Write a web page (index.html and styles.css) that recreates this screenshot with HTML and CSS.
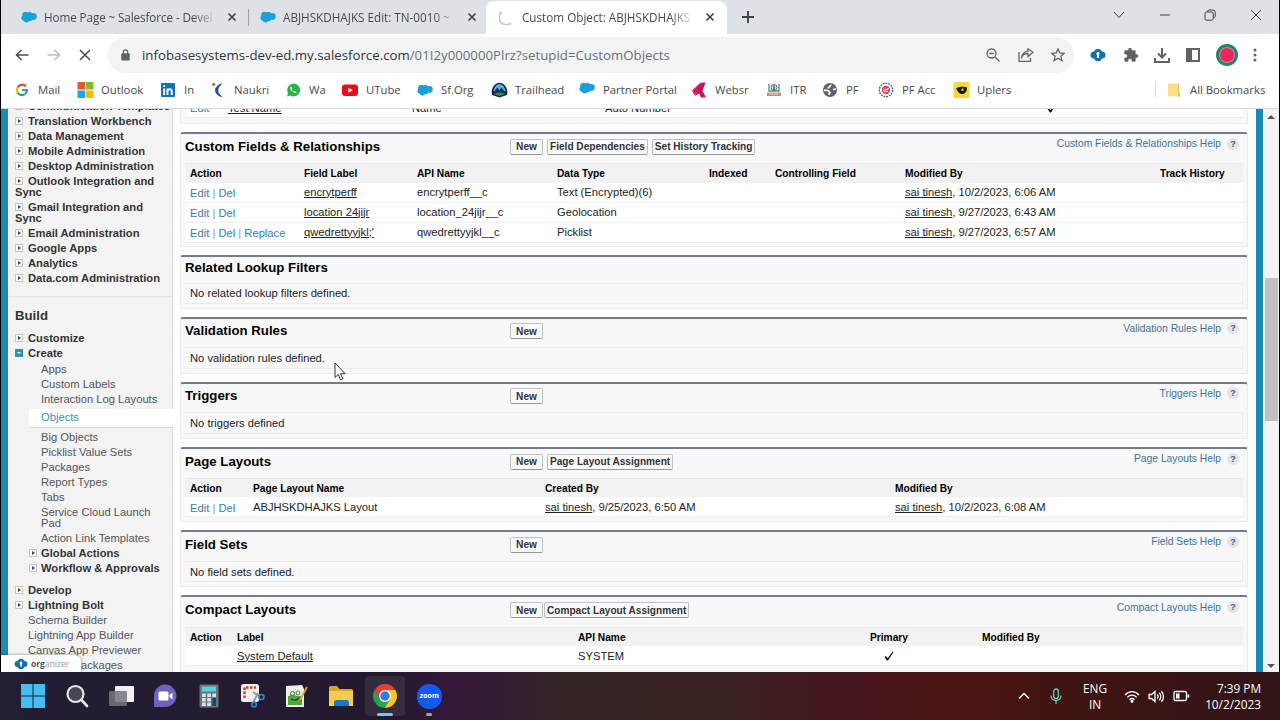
FILE: index.html
```
<!DOCTYPE html>
<html lang="en">
<head>
    <meta charset="UTF-8">
    <meta name="viewport" content="width=device-width, initial-scale=1">
    <title>Custom Object: ABJHSKDHAJKS</title>
    <link rel="stylesheet" href="styles.css">
</head>
<body>
    <!-- shared shapes -->
    <svg class="defs" width="0" height="0">
        <symbol id="cloud" viewBox="0 0 16 12">
            <path fill="#1b9fd9" d="M6.7 1.6A3 3 0 0 1 11 2.3a3.5 3.5 0 0 1 1.300-.3 3.400 3.400 0 0 1 0 6.900c-.4 0-.7 0-1-.1a2.600 2.600 0 0 1-3.300 1.100 3 3 0 0 1-5.400-.2A2.700 2.700 0 0 1 1.300 5 3.100 3.100 0 0 1 4 .8c1.100 0 2.100.4 2.700.8z"/>
        </symbol>
        <symbol id="close" viewBox="0 0 10 10">
            <path d="M1.500 1.500l7 7M8.500 1.500l-7 7" stroke="#3c4043" stroke-width="1.600" fill="none"/>
        </symbol>
        <symbol id="org" viewBox="0 0 18 14">
            <path fill="#1370ae" d="M5 3.500A4.300 4.300 0 0 1 13 3.500a3.500 3.500 0 0 1 0 7A4.300 4.300 0 0 1 5 10.500a3.500 3.500 0 0 1 0-7z"/>
            <path fill="#fff" d="M9 4a1.700 1.700 0 0 1 1 3v3H8V7a1.700 1.700 0 0 1 1-3z"/>
        </symbol>
    </svg>

    <div class="screen">
        <header class="tabstrip">
            <div class="tab tab-first">
                <svg class="tab-icon" width="16" height="12"><use href="#cloud"/></svg>
                <span class="tab-title">Home Page ~ Salesforce - Devel</span>
                <svg width="10" height="10"><use href="#close"/></svg>
            </div>
            <div class="tab tab-second">
                <svg class="tab-icon" width="16" height="12"><use href="#cloud"/></svg>
                <span class="tab-title">ABJHSKDHAJKS Edit: TN-0010 ~</span>
                <svg width="10" height="10"><use href="#close"/></svg>
            </div>
            <div class="tab tab-active">
                <svg class="tab-icon" width="16" height="16" viewBox="0 0 16 16"><path d="M2.500 3A7 7 0 0 0 12 14" stroke="#c5c9cc" stroke-width="1.800" fill="none"/></svg>
                <span class="tab-title">Custom Object: ABJHSKDHAJKS</span>
                <svg width="10" height="10"><use href="#close"/></svg>
            </div>
            <svg class="new-tab" width="14" height="14" viewBox="0 0 14 14"><path d="M7 1v12M1 7h12" stroke="#3c4043" stroke-width="1.900"/></svg>
            <div class="window-buttons">
                <svg width="12" height="12" viewBox="0 0 12 12"><path d="M1 3l5 5.500L11 3"/></svg>
                <svg width="12" height="12" viewBox="0 0 12 12"><path d="M1 6h10"/></svg>
                <svg width="12" height="12" viewBox="0 0 12 12"><path d="M3.500 3V2.500a1.500 1.500 0 0 1 1.500-1.500h4a2.200 2.200 0 0 1 2.200 2.200v4a1.500 1.500 0 0 1-1.500 1.500"/><rect x="1" y="3" width="8.200" height="8.200" rx="1.500"/></svg>
                <svg width="12" height="12" viewBox="0 0 12 12"><path d="M1 1l10 10M11 1L1 11"/></svg>
            </div>
        </header>

        <div class="toolbar">
            <div class="nav-buttons">
                <svg width="14" height="12" viewBox="0 0 14 12"><path d="M13.500 6H1.500M6.500 1L1.500 6l5 5" stroke="#4a4d50"/></svg>
                <svg width="14" height="12" viewBox="0 0 14 12"><path d="M.5 6h12M7.500 1l5 5-5 5" stroke="#bcbfc2"/></svg>
                <svg width="12" height="12" viewBox="0 0 12 12"><path d="M1 1l10 10M11 1L1 11" stroke="#4a4d50"/></svg>
            </div>
            <div class="address">
                <svg width="9" height="12" viewBox="0 0 9 12"><rect x=".3" y="4.200" width="8.400" height="7.300" rx="1" fill="#5f6368"/><path d="M2.300 5V3a2.200 2.200 0 0 1 4.400 0v2" fill="none" stroke="#5f6368" stroke-width="1.200"/></svg>
                <span class="url">infobasesystems-dev-ed.my.salesforce.com<span class="url-path">/01I2y000000Plrz?setupid=CustomObjects</span></span>
                <div class="address-icons">
                    <svg width="14" height="14" viewBox="0 0 14 14"><circle cx="5.500" cy="5.500" r="4.500"/><path d="M9 9l4.500 4.500M3.300 5.500h4.400"/></svg>
                    <svg width="16" height="14" viewBox="0 0 16 14"><path d="M1 4v9.300h11.500V10M3.500 10.500c.5-3.500 2.500-5 6.500-5V8.500l5-4.200L10 .8v2.400C6 3.500 4 6 3.500 10.500z"/></svg>
                    <svg width="14" height="14" viewBox="0 0 14 14"><path d="M7 1l1.800 4 4.400.4-3.300 2.900 1 4.300L7 10.300l-3.900 2.300 1-4.300L.8 5.400 5.200 5z"/></svg>
                </div>
            </div>
            <div class="extensions">
                <svg width="18" height="14"><use href="#org"/></svg>
                <svg width="16" height="16" viewBox="0 0 24 24"><path fill="#5f6368" d="M20.500 11H19V7a2 2 0 0 0-2-2h-4V3.500a2.500 2.500 0 0 0-5 0V5H4a2 2 0 0 0-2 2v3.800h1.500a2.700 2.700 0 0 1 0 5.400H2V20c0 1.100.9 2 2 2h3.800v-1.500a2.700 2.700 0 0 1 5.400 0V22H17a2 2 0 0 0 2-2v-4h1.500a2.500 2.500 0 0 0 0-5z"/></svg>
                <svg width="16" height="16" viewBox="0 0 16 16"><path d="M8 1v9M4 6.500l4 4 4-4M1 11v4h14v-4" stroke="#5f6368" stroke-width="2" fill="none"/></svg>
                <svg width="14" height="14" viewBox="0 0 14 14"><rect x="1" y="1" width="12" height="12" fill="none" stroke="#5f6368" stroke-width="2"/><path d="M1 1h5v12H1z" fill="#5f6368"/></svg>
                <span class="avatar"></span>
                <svg width="4" height="14" viewBox="0 0 4 14" fill="#5f6368"><circle cx="2" cy="2" r="1.500"/><circle cx="2" cy="7" r="1.500"/><circle cx="2" cy="12" r="1.500"/></svg>
            </div>
        </div>

        <nav class="bookmarks">
            <a class="bookmark"><svg width="16" height="16" viewBox="0 0 16 16" fill="none" stroke-width="2.200"><path d="M11.800 4.300A5 5 0 0 0 3.600 5.500" stroke="#e5423a"/><path d="M3.600 5.500a5 5 0 0 0 0 5" stroke="#f4b60b"/><path d="M3.600 10.500a5 5 0 0 0 7.400 1.500" stroke="#36a854"/><path d="M11 12a5 5 0 0 0 1.900-4H8" stroke="#4285f4"/></svg><span>Mail</span></a>
            <a class="bookmark"><svg width="17" height="16" viewBox="0 0 17 16"><path fill="#e5562b" d="M.5 0h7.500v7.500H.5z"/><path fill="#83b928" d="M9 0h7.500v7.500H9z"/><path fill="#1ea4e5" d="M.5 8.500h7.500V16H.5z"/><path fill="#fbb813" d="M9 8.500h7.500V16H9z"/></svg><span>Outlook</span></a>
            <a class="bookmark"><svg width="16" height="16" viewBox="0 0 16 16"><rect x="1" y="1" width="14" height="14" rx="1" fill="#1173b2"/><path d="M4.200 6.500V13M4.200 3.200v1.800M7.500 13V6.500M7.500 13V9.500c0-3 4.200-3 4.200 0V13" stroke="#fff" stroke-width="1.900" fill="none"/></svg><span>In</span></a>
            <a class="bookmark"><svg width="16" height="16" viewBox="0 0 16 16"><path d="M11.500 2C3 4.500 4 12.500 11.500 14.500 6.500 11 6.500 6 11.500 2z" fill="#274b8f" stroke="#274b8f"/><circle cx="3.700" cy="2.500" r="1.400" fill="#d93a3a"/></svg><span>Naukri</span></a>
            <a class="bookmark"><svg width="16" height="16" viewBox="0 0 16 16"><path d="M2 14.500l1-3.500a6.400 6.400 0 1 1 2.400 2.500z" fill="#28b446"/><path d="M5.700 4.500c-1 1-.4 3 1.400 4.700s3.700 2.200 4.500 1.200L10 9l-1 .8C7.700 9.200 7 8.300 6.600 7.300l.8-.9z" fill="#fff"/></svg><span>Wa</span></a>
            <a class="bookmark"><svg width="16" height="16" viewBox="0 0 16 16"><rect x="0" y="2.500" width="16" height="11.500" rx="3" fill="#e80c17"/><path d="M6.300 5.700l4.500 2.600-4.500 2.500z" fill="#fff"/></svg><span>UTube</span></a>
            <a class="bookmark"><svg width="16" height="12"><use href="#cloud"/></svg><span>Sf.Org</span></a>
            <a class="bookmark"><svg width="17" height="16" viewBox="0 0 17 16"><path d="M1 13C-.5 6 4 .8 8.500.8S17.500 6 16 13l-7.500 2.500z" fill="#14264f"/><path d="M2.500 9.500C3 5 5.500 2.300 8.500 2.300S14 5 14.500 9.500z" fill="#57b4dc"/><path d="M2.500 10.500l3.700-5 2.300 2.500L10.500 5.500l4 5z" fill="#1e3270"/><path d="M2.500 12c4-2 8-2 12 0l-6 2z" fill="#3a8a49"/></svg><span>Trailhead</span></a>
            <a class="bookmark"><svg class="raised" width="16" height="12"><use href="#cloud"/></svg><span>Partner Portal</span></a>
            <a class="bookmark"><svg width="16" height="16" viewBox="0 0 16 16"><path d="M9.500.5L1 8.500l2.500 5 4-5 2.500-8z" fill="#e01e5f"/><path d="M14.500.5h-4L6.500 7 4 14l4-2.500 2 4h5L11.500 9z" fill="#c4175a"/></svg><span>Websr</span></a>
            <a class="bookmark"><svg width="16" height="16" viewBox="0 0 16 16"><path d="M3 2v7h10V2" fill="none" stroke="#4a9b8c" stroke-width="1.400"/><circle cx="8" cy="5.500" r="3" fill="#e4ded0" stroke="#5f6a72"/><path d="M7.300 3.500h1.400v5H7.300z" fill="#555"/><path d="M1 10.500h14V14H1z" fill="#d38080"/><path d="M3 12h10" stroke="#fff" stroke-dasharray="1.500 1"/></svg><span>ITR</span></a>
            <a class="bookmark"><svg width="16" height="16" viewBox="0 0 16 16"><circle cx="8" cy="8" r="7" fill="#5f6368"/><path d="M9.500 3C7 3.500 8.500 5.500 5.500 6.200M2 8.200l4.500.5L8 10.500l-1.500 2.300M14 7l-3 .5" stroke="#fff" stroke-width="1.700" fill="none"/></svg><span>PF</span></a>
            <a class="bookmark"><svg width="16" height="16" viewBox="0 0 16 16"><circle cx="8" cy="8" r="6.700" fill="none" stroke="#474a86" stroke-width="1.300" stroke-dasharray="1.800 1"/><circle cx="8" cy="8" r="4.200" fill="#d9485d"/><path d="M5 8.500l6-2M6 10l4-1" stroke="#fff"/></svg><span>PF Acc</span></a>
            <a class="bookmark"><svg width="17" height="16" viewBox="0 0 17 16"><rect x=".5" width="16" height="16" rx="1.500" fill="#f5d93a"/><path d="M3 6.500C6 4.500 11 4.500 14 5.500c0 4-2 6.500-5 6.500S5 9.500 3 6.500z" fill="#17150c"/><circle cx="9.500" cy="7.800" r="1.300" fill="#d9c034"/></svg><span>Uplers</span></a>
            <a class="bookmark all-bookmarks"><svg width="14" height="14" viewBox="0 0 14 14"><path d="M1 .5h11v10l1 3H1z" fill="#fbdf86"/><path d="M11 .5v13l2 .3V10l-1-1V.5z" fill="#e6c566"/></svg><span>All Bookmarks</span></a>
        </nav>

        <div class="page">
            <aside class="sidebar">
                <div class="tree tree-admin">
                    <div class="node"><i class="toggle"></i>Communication Templates</div>
                    <div class="node"><i class="toggle"></i>Translation Workbench</div>
                    <div class="node"><i class="toggle"></i>Data Management</div>
                    <div class="node"><i class="toggle"></i>Mobile Administration</div>
                    <div class="node"><i class="toggle"></i>Desktop Administration</div>
                    <div class="node"><i class="toggle"></i>Outlook Integration and<br>Sync</div>
                    <div class="node"><i class="toggle"></i>Gmail Integration and<br>Sync</div>
                    <div class="node"><i class="toggle"></i>Email Administration</div>
                    <div class="node"><i class="toggle"></i>Google Apps</div>
                    <div class="node"><i class="toggle"></i>Analytics</div>
                    <div class="node"><i class="toggle"></i>Data.com Administration</div>
                </div>
                <div class="tree tree-build">
                    <h2>Build</h2>
                    <div class="node"><i class="toggle"></i>Customize</div>
                    <div class="node"><i class="toggle toggle-open"></i>Create</div>
                    <div class="leaves">
                        <a class="leaf">Apps</a>
                        <a class="leaf">Custom Labels</a>
                        <a class="leaf">Interaction Log Layouts</a>
                        <a class="leaf leaf-current">Objects</a>
                        <a class="leaf">Big Objects</a>
                        <a class="leaf">Picklist Value Sets</a>
                        <a class="leaf">Packages</a>
                        <a class="leaf">Report Types</a>
                        <a class="leaf">Tabs</a>
                        <a class="leaf">Service Cloud Launch Pad</a>
                        <a class="leaf">Action Link Templates</a>
                    </div>
                    <div class="node node-inner"><i class="toggle"></i>Global Actions</div>
                    <div class="node node-inner"><i class="toggle"></i>Workflow &amp; Approvals</div>
                    <div class="node node-gap"><i class="toggle"></i>Develop</div>
                    <div class="node"><i class="toggle"></i>Lightning Bolt</div>
                    <a class="leaf leaf-top">Schema Builder</a>
                    <a class="leaf leaf-top">Lightning App Builder</a>
                    <a class="leaf leaf-top">Canvas App Previewer</a>
                    <a class="leaf leaf-last">ackages</a>
                </div>
                <div class="organizer">
                    <svg width="16" height="12" viewBox="0 0 18 14"><use href="#org"/></svg>
                    <span><b>org</b>anizer</span>
                </div>
            </aside>

            <main class="lists">
                <section class="related related-standard">
                    <table>
                        <colgroup><col style="width: 38px"><col style="width: 184px"><col style="width: 193px"><col style="width: 442px"><col></colgroup>
                        <tr><td class="action"><a>Edit</a></td><td><a class="ul">Test Name</a></td><td>Name</td><td>Auto Number</td><td><svg width="10" height="10" viewBox="0 0 10 10"><path d="M.5 6L2 5l1.700 2.300L8.700.500l.8.400L4 9.500H3z" fill="#111"/></svg></td></tr>
                    </table>
                </section>

                <section class="related related-fields">
                    <div class="head">
                        <h3>Custom Fields &amp; Relationships</h3>
                        <button>New</button><button>Field Dependencies</button><button>Set History Tracking</button>
                        <a class="help">Custom Fields &amp; Relationships Help<span class="mark">?</span></a>
                    </div>
                    <table>
                        <colgroup><col style="width: 114px"><col style="width: 113px"><col style="width: 140px"><col style="width: 152px"><col style="width: 66px"><col style="width: 130px"><col style="width: 255px"><col></colgroup>
                        <tr><th>Action</th><th>Field Label</th><th>API Name</th><th>Data Type</th><th>Indexed</th><th>Controlling Field</th><th>Modified By</th><th>Track History</th></tr>
                        <tr><td class="action"><a>Edit</a> | <a>Del</a></td><td><a class="ul">encrytperff</a></td><td>encrytperff__c</td><td>Text (Encrypted)(6)</td><td></td><td></td><td><a class="ul">sai tinesh</a>, 10/2/2023, 6:06 AM</td><td></td></tr>
                        <tr><td class="action"><a>Edit</a> | <a>Del</a></td><td><a class="ul">location 24jijr</a></td><td>location_24jijr__c</td><td>Geolocation</td><td></td><td></td><td><a class="ul">sai tinesh</a>, 9/27/2023, 6:43 AM</td><td></td></tr>
                        <tr><td class="action"><a>Edit</a> | <a>Del</a> | <a>Replace</a></td><td><a class="ul">qwedrettyyjkl;'</a></td><td>qwedrettyyjkl__c</td><td>Picklist</td><td></td><td></td><td><a class="ul">sai tinesh</a>, 9/27/2023, 6:57 AM</td><td></td></tr>
                    </table>
                </section>

                <section class="related related-lookup">
                    <div class="head"><h3>Related Lookup Filters</h3></div>
                    <p class="empty">No related lookup filters defined.</p>
                </section>

                <section class="related related-rules">
                    <div class="head">
                        <h3>Validation Rules</h3>
                        <button>New</button>
                        <a class="help">Validation Rules Help<span class="mark">?</span></a>
                    </div>
                    <p class="empty">No validation rules defined.</p>
                </section>

                <section class="related related-rules">
                    <div class="head">
                        <h3>Triggers</h3>
                        <button>New</button>
                        <a class="help">Triggers Help<span class="mark">?</span></a>
                    </div>
                    <p class="empty">No triggers defined</p>
                </section>

                <section class="related related-layouts">
                    <div class="head">
                        <h3>Page Layouts</h3>
                        <button>New</button><button>Page Layout Assignment</button>
                        <a class="help">Page Layouts Help<span class="mark">?</span></a>
                    </div>
                    <table>
                        <colgroup><col style="width: 63px"><col style="width: 292px"><col style="width: 350px"><col></colgroup>
                        <tr><th>Action</th><th>Page Layout Name</th><th>Created By</th><th>Modified By</th></tr>
                        <tr><td class="action"><a>Edit</a> | <a>Del</a></td><td>ABJHSKDHAJKS Layout</td><td><a class="ul">sai tinesh</a>, 9/25/2023, 6:50 AM</td><td><a class="ul">sai tinesh</a>, 10/2/2023, 6:08 AM</td></tr>
                    </table>
                </section>

                <section class="related related-sets">
                    <div class="head">
                        <h3>Field Sets</h3>
                        <button>New</button>
                        <a class="help">Field Sets Help<span class="mark">?</span></a>
                    </div>
                    <p class="empty">No field sets defined.</p>
                </section>

                <section class="related related-compact">
                    <div class="head">
                        <h3>Compact Layouts</h3>
                        <button>New</button><button>Compact Layout Assignment</button>
                        <a class="help">Compact Layouts Help<span class="mark">?</span></a>
                    </div>
                    <table>
                        <colgroup><col style="width: 47px"><col style="width: 341px"><col style="width: 223px"><col style="width: 181px"><col></colgroup>
                        <tr><th>Action</th><th>Label</th><th>API Name</th><th class="mid">Primary</th><th>Modified By</th></tr>
                        <tr><td></td><td><a class="ul">System Default</a></td><td>SYSTEM</td><td class="mid"><svg width="10" height="10" viewBox="0 0 10 10"><path d="M.5 6L2 5l1.700 2.300L8.700.500l.8.400L4 9.500H3z" fill="#111"/></svg></td><td></td></tr>
                    </table>
                </section>
            </main>

            <div class="scrollbar">
                <i class="arrow-up"></i>
                <div class="thumb"></div>
                <i class="arrow-down"></i>
            </div>

            <svg class="cursor" width="12" height="19" viewBox="0 0 12 19"><path d="M1 1v14.500l3.300-3 2.200 5.300 2.300-1-2.200-5.100h4.500z" fill="#fff" stroke="#333" stroke-width="1"/></svg>
        </div>

        <footer class="taskbar">
            <div class="apps">
                <span class="app"><svg width="24" height="24" viewBox="0 0 24 24" fill="#45bdf0"><path d="M0 0h11.500v11.500H0zM12.500 0H24v11.500H12.500zM0 12.500h11.500V24H0zM12.500 12.500H24V24H12.500z"/></svg></span>
                <span class="app"><svg width="24" height="24" viewBox="0 0 24 24"><circle cx="10.500" cy="10" r="8" fill="#4a4555" stroke="#e8e6ea" stroke-width="2.200"/><path d="M16.500 16l5.500 6" stroke="#e8e6ea" stroke-width="2.600" stroke-linecap="round"/></svg></span>
                <span class="app"><svg width="26" height="24" viewBox="0 0 26 24"><rect x="7" y="2" width="19" height="16" rx="1" fill="#f1f0f0"/><rect x="1" y="7" width="18" height="15" rx="1" fill="#77747a" fill-opacity=".85"/></svg></span>
                <span class="app"><svg width="24" height="24" viewBox="0 0 24 24"><path d="M1 23V12a11.200 11.200 0 1 1 11 11z" fill="#7063bd"/><rect x="5.500" y="7.500" width="10" height="9" rx="1.500" fill="#fff"/><path d="M16.500 11l3-2.500v7l-3-2.500z" fill="#fff"/></svg></span>
                <span class="app"><svg width="20" height="24" viewBox="0 0 20 24"><rect x=".5" y=".5" width="19" height="23" rx="1" fill="#66767f"/><rect x="3" y="2.500" width="14" height="5" fill="#62d0dd"/><path d="M3 9.500h3.700V13H3zM8.200 9.500h3.700V13H8.200zM13.300 9.500H17V13h-3.700zM3 14h3.700v3.500H3zM8.200 14h3.700v3.500H8.200zM3 18.500h3.700V22H3zM8.200 18.500h3.700V22H8.200z" fill="#d8e2e6"/><path d="M13.300 14H17v8h-3.700z" fill="#17466f"/></svg></span>
                <span class="app"><svg width="26" height="24" viewBox="0 0 26 24"><rect x="1" y="0" width="18" height="18" rx="2.500" fill="#f4efed"/><path d="M4.500 14V3.500H16" fill="none" stroke="#c5472e" stroke-width="2.600" stroke-dasharray="2.500 1.500"/><path d="M13 8l6.500 4.500M13 19l5-10" stroke="#8a9aa8" stroke-width="1.800"/><circle cx="14" cy="20.500" r="2.300" fill="none" stroke="#2d87cf" stroke-width="1.700"/><circle cx="21.500" cy="13" r="2.500" fill="none" stroke="#2d87cf" stroke-width="1.700"/></svg></span>
                <span class="app"><svg width="24" height="24" viewBox="0 0 24 24"><path d="M1 2l16-1 2 4v18H1z" fill="#eef3e8"/><rect x="3" y="12" width="14" height="9" fill="#55a833"/><path d="M4 15c0-5 3-8 6-4s6-2 6 3-2 6-6 6-6-1-6-5z" fill="#53a53c"/><circle cx="7.500" cy="9.500" r="2" fill="#fff" stroke="#3a7c2a"/><circle cx="13" cy="9" r="2" fill="#fff" stroke="#3a7c2a"/><path d="M6 15c3 2 6 1 8-1" stroke="#17450f" stroke-width="1.300" fill="none"/><path d="M22 3l-7 13" stroke="#d4a62e" stroke-width="1.900"/></svg></span>
                <span class="app"><svg width="26" height="24" viewBox="0 0 26 24"><path d="M1 3.500A1.500 1.500 0 0 1 2.500 2H9l2.500 3h12A1.500 1.500 0 0 1 25 6.500V22H1z" fill="#dfa51f"/><path d="M1 7h24v15H1z" fill="#fbcb4d"/><path d="M6 22v-3.500A2.500 2.500 0 0 1 8.500 16h10a2.500 2.500 0 0 1 2.500 2.500V22z" fill="#1878bd"/></svg></span>
                <span class="app app-active"><svg width="26" height="26" viewBox="0 0 24 24"><path d="M12 6.500h9.530A11 11 0 0 1 12 23z" fill="#fbc71a"/><path d="M12 23A11 11 0 0 1 2.470 6.500L7.200 14.700 16.800 14.700z" fill="#2ba24c"/><path d="M2.470 6.500A11 11 0 0 1 21.530 6.500H12l-4.800 8z" fill="#e24135"/><circle cx="12" cy="12" r="5.500" fill="#fff"/><circle cx="12" cy="12" r="4.300" fill="#2f7de1"/></svg></span>
                <span class="app app-running"><span class="zoom">zoom</span></span>
            </div>
            <div class="tray">
                <svg width="12" height="8" viewBox="0 0 12 8"><path d="M1 6.500l5-5 5 5"/></svg>
                <svg class="mic" width="12" height="17" viewBox="0 0 12 17"><rect x="3.700" y="1" width="4.600" height="9.500" rx="2.300"/><path d="M1 7.500c0 6.500 10 6.500 10 0M6 12.500V16"/></svg>
                <div class="lang">ENG<br>IN</div>
                <svg width="16" height="13" viewBox="0 0 16 13"><path d="M1 5c4-4.500 10-4.500 14 0M3.300 7.400c2.700-3 6.700-3 9.400 0M5.500 9.700c1.500-1.600 3.500-1.600 5 0"/><circle cx="8" cy="11.300" r=".9" fill="#fff"/></svg>
                <svg width="17" height="13" viewBox="0 0 17 13"><path d="M1 4.500v4h2.500l3.500 3v-10l-3.500 3zM9.300 4.500c1 1 1 3 0 4M11.300 2.800c2 2 2 5.400 0 7.400M13.400 1.200c2.800 3 2.800 7.600 0 10.600"/></svg>
                <svg width="17" height="12" viewBox="0 0 17 12"><rect x="1" y="1.500" width="12.500" height="9" rx="1.500"/><path d="M15.300 4.500v3" stroke-width="1.800"/><path d="M3 3.500h3.500v5H3z" fill="#fff" stroke="none"/></svg>
                <div class="clock">7:39 PM<br>10/2/2023</div>
            </div>
        </footer>
    </div>
</body>
</html>
```

FILE: styles.css
```
* {
    box-sizing: border-box;
}
body {
    margin: 0;
    background: #000;
    font-family: "Liberation Sans", Arial, sans-serif;
    font-size: 11.2px;
    color: #222;
}
.defs {
    position: absolute;
}
.screen {
    display: flex;
    flex-direction: column;
    width: 1280px;
    height: 720px;
    padding: 0 1px;
    overflow: hidden;
}
.screen svg {
    flex: none;
    display: block;
}

/* browser chrome */
.tabstrip, .toolbar, .bookmarks {
    display: flex;
    align-items: center;
    flex: none;
    font-family: "Open Sans", sans-serif;
}
.tabstrip {
    height: 34px;
    background: #dee1e5;
}
.tab {
    display: flex;
    align-items: center;
    width: 248px;
    height: 17px;
    padding: 0 11px 0 20px;
    border-right: 1px solid #9a9da1;
    font-size: 11.7px;
    color: #45494d;
}
.tab-icon {
    margin-right: 7px;
}
.tab-title {
    flex: 1;
    min-width: 0;
    margin-right: 14px;
    white-space: nowrap;
    -webkit-mask-image: linear-gradient(to right, #000 88%, rgba(0, 0, 0, 0.2));
    mask-image: linear-gradient(to right, #000 88%, rgba(0, 0, 0, 0.2));
}
.tab-first {
    letter-spacing: -0.1px;
}
.tab-second {
    width: 237px;
    padding: 0 9px 0 11px;
    border-right: 0;
}
.tab-active {
    align-self: flex-end;
    width: 241px;
    height: 33px;
    padding: 0 12px 2px 13px;
    border: 0;
    border-radius: 8px 8px 0 0;
    background: #fff;
}
.new-tab {
    margin-left: 14px;
}
.window-buttons {
    display: flex;
    gap: 33.6px;
    margin: 0 17px 5px auto;
}
.window-buttons svg, .address-icons svg, .nav-buttons svg {
    fill: none;
    stroke: #3c4043;
}
.toolbar {
    height: 42px;
    background: #fff;
}
.nav-buttons {
    display: flex;
    width: 107px;
    padding-left: 14px;
    gap: 18px;
}
.nav-buttons svg {
    stroke-width: 1.5;
}
.address {
    display: flex;
    align-items: center;
    width: 966px;
    height: 36px;
    padding: 0 9px 0 13px;
    border-radius: 18px;
    background: #f1f3f4;
}
.url {
    margin-left: 12px;
    font-size: 13.25px;
    color: #303337;
    white-space: nowrap;
}
.url-path {
    color: #6b6f74;
}
.address-icons {
    display: flex;
    gap: 17.5px;
    margin-left: auto;
}
.address-icons svg {
    stroke: #5f6368;
    stroke-width: 1.3;
}
.extensions {
    display: flex;
    align-items: center;
    gap: 15.7px;
    padding-left: 15px;
}
.avatar {
    width: 22px;
    height: 22px;
    border: 3px solid #258369;
    border-radius: 50%;
    background: #e9245f;
    box-shadow: inset 0 0 0 1px #b9a5a3;
}
.bookmarks {
    display: grid;
    grid-template-columns: 63px 83px 50px 75px 57px 75px 74px 88px 112px 75px 56px 56px 75px 202px 1fr;
    height: 33px;
    padding: 0 0 5px 13px;
    border-bottom: 1px solid #d5d7d9;
    background: #fff;
    font-size: 11.3px;
    color: #45494d;
}
.bookmark {
    display: grid;
    grid-template-columns: 24px auto;
    align-items: center;
    white-space: nowrap;
}
.raised {
    margin-bottom: 4px;
}
.all-bookmarks {
    grid-template-columns: 23px auto;
    padding-left: 11px;
    border-left: 1px solid #d5d7d9;
}

/* setup page */
.page {
    position: relative;
    display: flex;
    flex: 1;
    min-height: 0;
    overflow: hidden;
    background: #fff;
    border-left: 7px solid #1b8cb0;
}
.sidebar {
    width: 165px;
    background: #f3f3f3;
    border-right: 1px solid #dedede;
    color: #333;
}
.tree-admin {
    height: 198px;
    margin-top: -10px;
    border-bottom: 1px solid #e0e0e0;
}
.node {
    padding: 2px 4px 2px 7px;
    line-height: 11px;
    font-weight: bold;
    white-space: nowrap;
}
.toggle {
    display: inline-block;
    width: 8px;
    height: 8px;
    margin-right: 5px;
    border: 1px solid #c4c4c4;
    background: #fff;
    vertical-align: 0;
}
.toggle::after {
    content: "";
    display: block;
    width: 0;
    margin: 1px 0 0 2px;
    border: 2px solid transparent;
    border-left: 3px solid #444;
    border-right: 0;
}
.toggle-open {
    border-color: #2a94b5;
    background: #2a94b5;
}
.toggle-open::after {
    margin: 2px 0 0 1px;
    border: 2px solid transparent;
    border-top: 2px solid #fff;
    border-bottom: 0;
}
.tree-build h2 {
    margin: 0;
    padding: 11px 0 7px 7px;
    font-size: 13.2px;
    line-height: 16px;
}
.leaves {
    padding-top: 1px;
}
.leaf {
    display: block;
    padding: 2px 12px 2px 33px;
    line-height: 11px;
    color: #555;
}
.leaf-current {
    height: 19px;
    margin: 2px -1px 2px 21px;
    padding: 3px 0 0 12px;
    background: #fff;
    border-bottom: 1px solid #d8d8d8;
    color: #3a92b4;
}
.node-inner {
    padding-left: 21px;
}
.node-inner .toggle {
    margin-right: 4px;
}
.node-gap {
    margin-top: 7px;
}
.leaf-top {
    padding-left: 20px;
}
.leaf-last {
    padding-left: 73px;
}
.organizer {
    position: absolute;
    left: -7px;
    bottom: 0;
    display: flex;
    align-items: center;
    gap: 2px;
    width: 80px;
    height: 17px;
    padding-left: 12px;
    border-radius: 0 6px 0 0;
    background: #fff;
    box-shadow: 0 0 3px rgba(0, 0, 0, 0.5);
    font-family: "Open Sans", sans-serif;
    font-size: 8.5px;
    color: #999;
}
.organizer b {
    color: #555;
}

/* the teal frame must not clip the badge */
.page {
    border-left: 0;
    padding-left: 7px;
    background: linear-gradient(to right, #1b8cb0 7px, #fff 7px);
}
.page .organizer {
    left: 0;
}
.page .cursor {
    left: 333px;
}

.lists {
    width: 1083px;
    padding: 0 8px 0 7px;
}
.related {
    height: 57px;
    margin-bottom: 8px;
    padding: 0 4px;
    border: 1px solid #ebebeb;
    border-top: 2px solid #737c8a;
    border-radius: 3px 3px 0 0;
    background: #f8f8f8;
}
.head {
    display: flex;
    align-items: center;
    height: 28px;
    padding-right: 4px;
}
.head h3 {
    width: 325px;
    margin: 0 0 5px 0;
    font-size: 13.25px;
    color: #000;
}
.related button {
    height: 16px;
    margin: 0 4px 4px 0;
    padding: 0 2px;
    border: 1px solid #c0c0c0;
    border-bottom-color: #959595;
    border-radius: 2px;
    background: #fafafa;
    font: bold 10.1px/13px "Liberation Sans", Arial, sans-serif;
    color: #333;
    white-space: nowrap;
}
.related h3 + button {
    width: 33px;
}
.help {
    display: flex;
    align-items: center;
    gap: 6px;
    margin: 0 0 10px auto;
    font-size: 10.3px;
    color: #3b729b;
}
.mark {
    width: 12px;
    height: 12px;
    border-radius: 50%;
    background: #e1e5ea;
    font-size: 9px;
    font-weight: bold;
    line-height: 12px;
    text-align: center;
    color: #44617e;
}
.related table {
    width: 1058px;
    table-layout: fixed;
    border-spacing: 0;
    background: #fff;
}
.related th, .related td {
    height: 20px;
    padding: 0 0 0 5px;
    line-height: 14px;
    text-align: left;
    white-space: nowrap;
}
.related th {
    background: #f2f2f2;
    border-top: 1px solid #e9e9e9;
    font-size: 10.2px;
    color: #000;
}
.related td {
    padding-bottom: 2px;
    border-bottom: 1px solid #eee;
}
.related td.action {
    padding-bottom: 0;
    color: #8a9aaa;
}
.action a {
    color: #3b7cab;
}
.ul {
    text-decoration: underline;
}
.related .mid {
    padding-left: 5px;
    text-align: center;
}
.mid svg {
    margin: 0 auto;
}
.empty {
    height: 22px;
    margin: 0;
    padding-left: 5px;
    border: 1px solid #ebebeb;
    border-width: 1px 1px 1px 0;
    line-height: 21px;
}
.related-standard {
    height: 26px;
    margin-top: -11px;
    border-top-width: 0;
}
.related-standard td {
    padding-bottom: 0;
}
.related-fields {
    height: 115px;
}
.related-fields .head, .related-layouts .head, .related-sets .head {
    height: 29px;
}
.related-lookup {
    height: 54px;
}
.related-lookup .head {
    height: 26px;
}
.related-lookup .empty {
    height: 21px;
    line-height: 18px;
}
.related-sets .empty {
    height: 21px;
    line-height: 21px;
}
.related-layouts {
    height: 75px;
}
.related-layouts th, .related-compact th {
    height: 19px;
    padding-top: 1px;
}
.related-layouts td, .related-compact td {
    padding-bottom: 0;
}
.related-layouts td.action {
    padding-top: 2px;
}
.related-compact .head {
    height: 30px;
}
.related-compact h3 + button {
    margin-right: 1px;
}
.related-compact {
    height: 90px;
}

.scrollbar {
    display: flex;
    flex-direction: column;
    align-items: center;
    width: 23px;
    border-left: 7px solid #1b8cb0;
    background: #f4f4f4;
}
.arrow-up, .arrow-down {
    border: 4px solid transparent;
}
.arrow-up {
    margin-top: 2px;
    border-bottom-color: #555;
}
.thumb {
    width: 13px;
    height: 143px;
    margin-top: 159px;
    background: #c1c1c1;
}
.arrow-down {
    margin: auto 0 0;
    border-top-color: #555;
}
.cursor {
    position: absolute;
    top: 253px;
}

/* windows taskbar */
.taskbar {
    display: flex;
    justify-content: space-between;
    flex: none;
    height: 48px;
    margin: 0 -1px;
    background: linear-gradient(to right, #231e33, #24192f 400px, #33173a 445px, #342424 570px, #3a2020 740px, #46151d 850px, #4a1512 960px, #3c1412 1100px, #321518);
    color: #fff;
}
.apps {
    display: flex;
    align-items: center;
    padding-left: 12.5px;
}
.app {
    display: flex;
    flex-direction: column;
    align-items: center;
    justify-content: center;
    width: 40px;
    height: 40px;
    margin-right: 4.1px;
}
.app-active {
    position: relative;
    border-radius: 4px;
    background: rgba(255, 255, 255, 0.08);
}
.app-running {
    position: relative;
}
.app-active::after, .app-running::after {
    content: "";
    position: absolute;
    bottom: 0;
    width: 16px;
    height: 3px;
    border-radius: 2px;
    background: #5fd5e6;
}
.app-running::after {
    width: 6px;
    background: #a8a2ab;
}
.zoom {
    width: 25px;
    height: 25px;
    border-radius: 12px;
    background: #1259f0;
    font: bold 7px/24px "Open Sans", sans-serif;
    text-align: center;
}
.tray {
    display: flex;
    align-items: center;
    padding-right: 19px;
    font: 11.8px/16px "Open Sans", sans-serif;
}
.tray svg {
    fill: none;
    stroke: #fff;
    stroke-width: 1.3;
}
.tray .mic {
    margin-left: 20px;
    stroke: #6fc9b2;
}
.lang {
    width: 30px;
    margin: 0 14px 0 18px;
    text-align: center;
}
.tray .lang ~ svg {
    margin-right: 8px;
}
.clock {
    width: 63px;
    text-align: right;
}
```
